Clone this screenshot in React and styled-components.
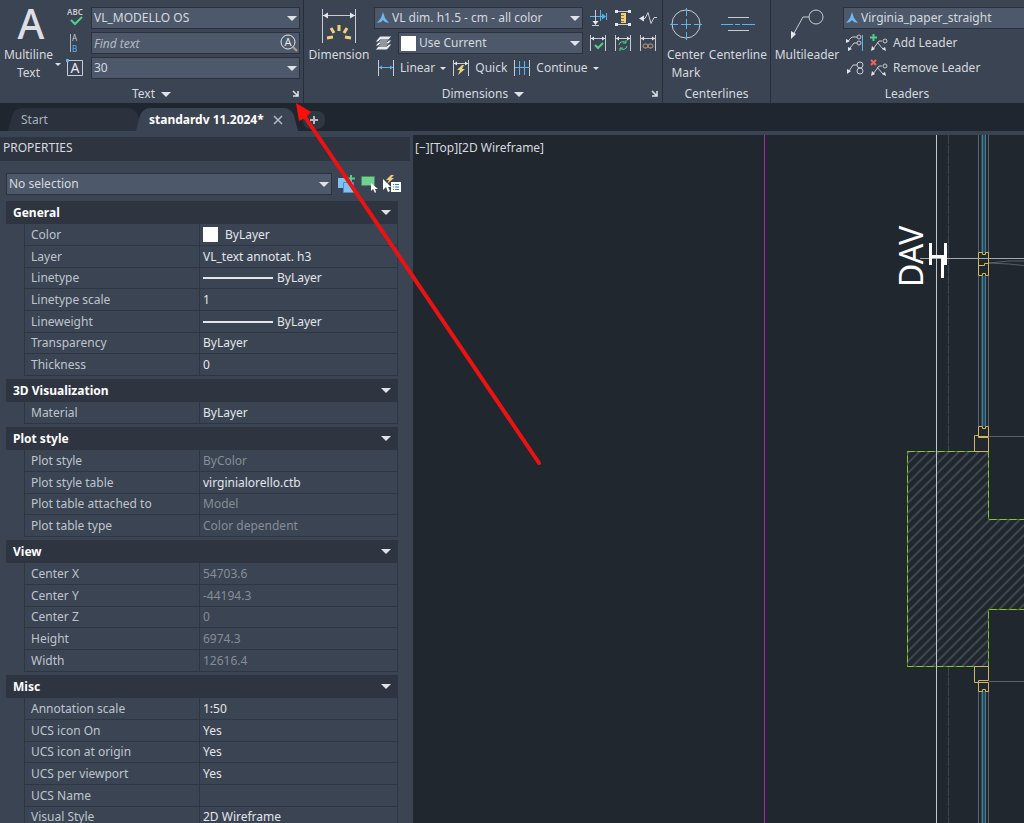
import React from "react";
import styled, { createGlobalStyle, css } from "styled-components";

const GlobalStyle = createGlobalStyle`
  * {
    box-sizing: border-box;
  }
  body {
    margin: 0;
    background: #21272f;
    color: #d5d9df;
    font-family: "Noto Sans", "Open Sans", sans-serif;
    font-size: 12px;
    line-height: 18px;
  }
  button, input, select {
    font: inherit;
    color: inherit;
  }
`;

// palette sections, top to bottom
const sections = [
  {
    title: "General",
    rows: [
      { name: "Color", value: "ByLayer", mark: "swatch" },
      { name: "Layer", value: "VL_text annotat. h3" },
      { name: "Linetype", value: "ByLayer", mark: "line" },
      { name: "Linetype scale", value: "1" },
      { name: "Lineweight", value: "ByLayer", mark: "line" },
      { name: "Transparency", value: "ByLayer" },
      { name: "Thickness", value: "0" },
    ],
  },
  { title: "3D Visualization", rows: [{ name: "Material", value: "ByLayer" }] },
  {
    title: "Plot style",
    rows: [
      { name: "Plot style", value: "ByColor", muted: true },
      { name: "Plot style table", value: "virginialorello.ctb" },
      { name: "Plot table attached to", value: "Model", muted: true },
      { name: "Plot table type", value: "Color dependent", muted: true },
    ],
  },
  {
    title: "View",
    rows: [
      { name: "Center X", value: "54703.6", muted: true },
      { name: "Center Y", value: "-44194.3", muted: true },
      { name: "Center Z", value: "0", muted: true },
      { name: "Height", value: "6974.3", muted: true },
      { name: "Width", value: "12616.4", muted: true },
    ],
  },
  {
    title: "Misc",
    rows: [
      { name: "Annotation scale", value: "1:50" },
      { name: "UCS icon On", value: "Yes" },
      { name: "UCS icon at origin", value: "Yes" },
      { name: "UCS per viewport", value: "Yes" },
      { name: "UCS Name", value: "" },
      { name: "Visual Style", value: "2D Wireframe" },
    ],
  },
];

const Caret = ({ size = 10 }) => (
  <svg width={size} height={size / 2} viewBox="0 0 10 5" aria-hidden="true">
    <path d="M0 0h10L5 5z" fill="#dfe3e8" />
  </svg>
);

const Icon = ({ w = 18, h = 18, children }) => (
  <svg
    width={w}
    height={h}
    viewBox={`0 0 ${w} ${h}`}
    fill="none"
    stroke="#c9cdd3"
    overflow="visible"
    aria-hidden="true"
  >
    {children}
  </svg>
);

const Combo = ({ label, value, icon }) => (
  <Field>
    {icon}
    <FieldSelect aria-label={label} defaultValue={value}>
      <option>{value}</option>
    </FieldSelect>
    <Caret />
  </Field>
);

const StyleIcon = () => (
  <Icon w={12} h={14}>
    <path d="M6 1l2 6 4 5-4-1-2-2-2 2-4 1 4-5z" fill="#6cb8f2" stroke="none" />
  </Icon>
);

const LauncherIcon = () => (
  <Icon w={8} h={8}>
    <path d="M1 1l5 5M6 1v5H1" stroke="#dfe3e8" strokeWidth="1.5" />
  </Icon>
);

const TextPanel = () => (
  <Panel>
    <PanelBody>
      <BigButton $width={65}>
        <Icon w={30} h={36}>
          <text
            x="13"
            y="31"
            textAnchor="middle"
            fontSize="41"
            fontWeight="500"
            fill="#dcdfe3"
            stroke="none"
          >
            A
          </text>
        </Icon>
        <SplitLabel>
          <span>
            Multiline
            <br />
            Text
          </span>
          <Caret size={6} />
        </SplitLabel>
      </BigButton>
      <Rows>
        <Row>
          <IconButton aria-label="Check spelling">
            <Icon w={20} h={20}>
              <text x="10" y="7" textAnchor="middle" fontSize="8" fontWeight="600" fill="#c9cdd3" stroke="none">
                ABC
              </text>
              <path d="M6 12l4 4 7-7" stroke="#4fd18b" strokeWidth="2" />
            </Icon>
          </IconButton>
          <Combo label="Text style" value="VL_MODELLO OS" />
        </Row>
        <Row>
          <IconButton aria-label="Text align">
            <Icon w={20} h={20}>
              <path d="M5.500 1v18" stroke="#aeb4bd" />
              <text x="7" y="8" fontSize="8" fill="#c9cdd3" stroke="none">A</text>
              <text x="7" y="19" fontSize="8" fill="#5ab4f0" stroke="none">B</text>
            </Icon>
          </IconButton>
          <Field>
            <FindInput type="text" aria-label="Find text" placeholder="Find text" />
            <Icon>
              <circle cx="9" cy="8" r="7" stroke="#e3e7ec" />
              <text x="9" y="12" textAnchor="middle" fontSize="11" fill="#e3e7ec" stroke="none">
                A
              </text>
              <path d="M14 13l4 4" stroke="#b3a184" strokeWidth="2" />
            </Icon>
          </Field>
        </Row>
        <Row>
          <IconButton aria-label="Text height">
            <Icon w={20} h={20}>
              <path d="M2.500 2.500h15v15h-15z" />
              <text x="10" y="15" textAnchor="middle" fontSize="14" fill="#e3e7ec" stroke="none">
                A
              </text>
              <path d="M1 1h3v3H1z" fill="#5ab4f0" stroke="none" />
            </Icon>
          </IconButton>
          <Combo label="Text height" value="30" />
        </Row>
      </Rows>
    </PanelBody>
    <PanelFooter>
      <FooterButton>
        Text <Caret />
      </FooterButton>
      <Launcher aria-label="Text style settings">
        <LauncherIcon />
      </Launcher>
    </PanelFooter>
  </Panel>
);

// vertical extension lines shared by the small dimension icons
const Extents = () => (
  <>
    <path d="M1.500 1v16M16.500 1v16M2 4.500h14" />
    <path d="M2 4.500l3-2v4zM16 4.500l-3-2v4z" fill="#e3e7ec" stroke="none" />
  </>
);

const DimensionsPanel = () => (
  <Panel $width={359}>
    <PanelBody $end={5}>
      <BigButton $width={70}>
        <Icon w={36} h={36}>
          <path d="M1.500 1v34M34.500 1v34M2 7.500h32" />
          <path d="M2 7.500l5-3v6zM34 7.500l-5-3v6z" fill="#e3e7ec" stroke="none" />
          <path
            d="M18 17v6M10 20l3 5M26 20l-3 5M6 30l6-1M30 30l-6-1"
            stroke="#f3cf77"
            strokeWidth="3"
          />
        </Icon>
        Dimension
      </BigButton>
      <Rows>
        <Row>
          <Combo label="Dimension style" value="VL dim. h1.5 - cm - all color" icon={<StyleIcon />} />
          <ToolGroup>
            <IconButton aria-label="Adjust space">
              <Icon>
                <path d="M1 7.500h15M11.500 1v11M17.500 4v7" stroke="#5ab4f0" />
                <path d="M6.500 1v14M3 16.500h7" />
                <path d="M17 7.500l-4-3v6z" fill="#5ab4f0" stroke="none" />
                <path d="M6.500 16l-3-4h6z" fill="#e3e7ec" stroke="none" />
              </Icon>
            </IconButton>
            <IconButton aria-label="Break">
              <Icon>
                <path d="M2 2.500h14M2 15.500h14" />
                <path d="M1 1h3v3H1zM14 1h3v3h-3zM1 14h3v3H1zM14 14h3v3h-3z" fill="#e3e7ec" stroke="none" />
                <path d="M7 4h5v10H7z" fill="#f3cf77" stroke="none" />
                <path d="M7 6.500h3M7 9.500h3M7 12.500h3" stroke="#8f7637" />
              </Icon>
            </IconButton>
            <IconButton aria-label="Jog line">
              <Icon>
                <path d="M1 9.500h5l3-6 3 11 3-6h3" />
                <path d="M0 9.500l5-3v6z" fill="#e3e7ec" stroke="none" />
              </Icon>
            </IconButton>
          </ToolGroup>
        </Row>
        <Row>
          <Icon>
            <path d="M6 10h12l-5 6H1zM6 6h12l-5 6H1zM6 2h12l-5 6H1z" fill="#e8eaed" stroke="#3b4453" />
          </Icon>
          <Combo label="Dimension layer" value="Use Current" icon={<Swatch />} />
          <ToolGroup>
            <IconButton aria-label="Inspect">
              <Icon>
                <Extents />
                <path d="M6 11l3 3 5-5" stroke="#4fd18b" strokeWidth="2" />
              </Icon>
            </IconButton>
            <IconButton aria-label="Update">
              <Icon>
                <Extents />
                <path d="M5 11a4 4 0 0 1 7-2M13 12a4 4 0 0 1-7 2M12 6v3H9M6 17v-3h3" stroke="#4fd18b" />
              </Icon>
            </IconButton>
            <IconButton aria-label="Reassociate">
              <Icon>
                <Extents />
                <rect x="4" y="10" width="5" height="4" rx="2" stroke="#c59b78" />
                <rect x="9" y="10" width="5" height="4" rx="2" stroke="#c59b78" />
              </Icon>
            </IconButton>
          </ToolGroup>
        </Row>
        <Row $indent>
          <ToolButton>
            <Icon>
              <path d="M1.500 1v16M16.500 1v16" />
              <path d="M2 8.500h14" stroke="#5ab4f0" />
              <path d="M2 8.500l3-2v4zM16 8.500l-3-2v4z" fill="#5ab4f0" stroke="none" />
            </Icon>
            Linear
            <Caret size={6} />
          </ToolButton>
          <ToolButton>
            <Icon>
              <Extents />
              <path d="M10 6l-5 5h3l-2 5 7-6h-3l2-4z" fill="#f3cf77" stroke="none" />
            </Icon>
            Quick
          </ToolButton>
          <ToolButton>
            <Icon>
              <path d="M1.500 1v16M16.500 1v16" />
              <path d="M6.500 2v14M11.500 2v14M2 8.500h15" stroke="#5ab4f0" />
            </Icon>
            Continue
            <Caret size={6} />
          </ToolButton>
        </Row>
      </Rows>
    </PanelBody>
    <PanelFooter>
      <FooterButton>
        Dimensions <Caret />
      </FooterButton>
      <Launcher aria-label="Dimension style settings">
        <LauncherIcon />
      </Launcher>
    </PanelFooter>
  </Panel>
);

const CenterlinesPanel = () => (
  <Panel $width={108}>
    <PanelBody $start={4} $gap={4}>
      <BigButton>
        <Icon w={34} h={36}>
          <circle cx="17" cy="16" r="14" />
          <path d="M1 16.500h8M12 16.500h10M25 16.500h8M17.500 0v8M17.500 11v10M17.500 24v8" stroke="#5ab4f0" />
        </Icon>
        Center
        <br />
        Mark
      </BigButton>
      <BigButton>
        <Icon w={34} h={36}>
          <path d="M7 9.500h21M7 22.500h21" />
          <path d="M0 16.500h12M14 16.500h5M21 16.500h13" stroke="#5ab4f0" />
        </Icon>
        Centerline
      </BigButton>
    </PanelBody>
    <PanelFooter>Centerlines</PanelFooter>
  </Panel>
);

const LeaderIcon = ({ mark }) => (
  <Icon>
    <path d="M3 15l6-8h3M7 8l6 7" />
    <circle cx="15" cy="7" r="2" />
    <path d="M1 17l1-5 3 3zM16 17l-4-2 3-2z" fill="#e3e7ec" stroke="none" />
    {mark === "add" ? (
      <path d="M3.500 0v7M0 3.500h7" stroke="#4fd18b" strokeWidth="2" />
    ) : (
      <path d="M1 1l5 5M6 1L1 6" stroke="#f0625f" strokeWidth="2" />
    )}
  </Icon>
);

const LeadersPanel = () => (
  <Panel $width={273}>
    <PanelBody>
      <BigButton $width={72}>
        <Icon w={36} h={36}>
          <circle cx="27" cy="9" r="7" />
          <path d="M20 9h-6L4 27" />
          <path d="M2 31v-8l5 3z" fill="#e3e7ec" stroke="none" />
        </Icon>
        Multileader
      </BigButton>
      <Rows>
        <Row>
          <Combo label="Multileader style" value="Virginia_paper_straight" icon={<StyleIcon />} />
        </Row>
        <Row $indent>
          <IconButton aria-label="Align leaders">
            <Icon>
              <path d="M2 7l4-4h5M4 14l4-5h3" />
              <circle cx="13" cy="3" r="2" />
              <circle cx="13" cy="9" r="2" />
              <path d="M0 9V5l4 2zM2 17v-4l4 2z" fill="#e3e7ec" stroke="none" />
              <path d="M16.500 1v16" stroke="#5ab4f0" />
            </Icon>
          </IconButton>
          <ToolButton>
            <LeaderIcon mark="add" />
            Add Leader
          </ToolButton>
        </Row>
        <Row $indent>
          <IconButton aria-label="Collect leaders">
            <Icon>
              <path d="M3 12l4-6h4" />
              <circle cx="14" cy="6" r="3" />
              <circle cx="14" cy="12" r="3" />
              <path d="M1 15v-5l4 2z" fill="#e3e7ec" stroke="none" />
            </Icon>
          </IconButton>
          <ToolButton>
            <LeaderIcon mark="remove" />
            Remove Leader
          </ToolButton>
        </Row>
      </Rows>
    </PanelBody>
    <PanelFooter>Leaders</PanelFooter>
  </Panel>
);

const PropertyValue = ({ row }) => (
  <ValueBox>
    {row.mark === "swatch" && <Swatch $spaced />}
    {row.mark === "line" && <LineSample />}
    {row.value}
  </ValueBox>
);

const Properties = () => (
  <Palette>
    <PaletteTitle>PROPERTIES</PaletteTitle>
    <PaletteBody>
      <SelectionRow>
        <Combo label="Selection" value="No selection" />
        <IconButton aria-label="Toggle PICKADD">
          <Icon>
            <path d="M1 3h10v10H1z" fill="#7dc1f5" stroke="none" />
            <path d="M6.500 7.500h10v10h-10z" fill="#7dc1f5" stroke="#4c8fc4" />
            <path d="M14 0v7M11 3.500h7" stroke="#4fd18b" strokeWidth="2" />
          </Icon>
        </IconButton>
        <IconButton aria-label="Select objects">
          <Icon>
            <path d="M1.500 1.500h13v9h-13z" fill="#74cf92" stroke="#3c8f5b" strokeDasharray="2 1" />
            <path d="M11 8v8l2-2 2 4 1-1-1-3h3z" fill="#fff" stroke="none" />
          </Icon>
        </IconButton>
        <IconButton aria-label="Quick select">
          <Icon>
            <path d="M8 0L3 5h3L4 9l7-6H8l3-3z" fill="#f3cf77" stroke="none" />
            <path d="M0 4v11l3-3 2 5 2-1-2-4h3z" fill="#fff" stroke="none" />
            <path d="M8 7h10v10H8z" fill="#fff" stroke="none" />
            <path d="M10 9.500h1M12 9.500h4M10 12h1M12 12h4M10 14.500h1M12 14.500h4" stroke="#2f7dbd" />
          </Icon>
        </IconButton>
      </SelectionRow>
      {sections.map((section) => (
        <Section key={section.title}>
          <SectionHeader>
            {section.title}
            <Caret />
          </SectionHeader>
          <PropertyTable>
            <tbody>
              {section.rows.map((row) => (
                <tr key={row.name}>
                  <PropertyName scope="row">{row.name}</PropertyName>
                  <PropertyCell $muted={row.muted}>
                    <PropertyValue row={row} />
                  </PropertyCell>
                </tr>
              ))}
            </tbody>
          </PropertyTable>
        </Section>
      ))}
    </PaletteBody>
  </Palette>
);

const Drawing = () => (
  <DrawingSvg role="img" aria-label="Plan drawing">
    <defs>
      <pattern id="hatch" width="7" height="7" patternUnits="userSpaceOnUse" patternTransform="rotate(45)">
        <path d="M1 0v7" stroke="#535b65" strokeWidth="1.2" />
      </pattern>
    </defs>
    <path d="M351.500 0v688" stroke="#a32aa5" />
    <path d="M535.500 0v316M535.500 532v156" stroke="#41474f" strokeDasharray="9 1" />
    {/* window glass */}
    <path d="M565.500 0v118M565.500 141v150M565.500 556v132M575.500 0v118M575.500 141v150M575.500 556v132" stroke="#5c636c" />
    <path d="M570.500 0v118M570.500 141v150M570.500 556v132" stroke="#2b4b59" strokeWidth="5" />
    <path d="M569.500 0v118M569.500 141v150M569.500 556v132M572.500 0v118M572.500 141v150M572.500 556v132" stroke="#417f96" />
    {/* wall */}
    <path
      d="M494.500 316.500h81v68H640v90h-64.500v57h-81z"
      fill="url(#hatch)"
      stroke="#4d7d20"
    />
    <path
      d="M494.500 316.500h81v68H640v90h-64.500v57h-81z"
      fill="none"
      stroke="#86c733"
      strokeDasharray="7 3"
    />
    <path d="M576 301.500h60M576 546.500h60" stroke="#596069" />
    <path d="M507 123.500h130" stroke="#a4a8ad" />
    <path d="M576 128l20-2h40M576 128l20 1 40 4" stroke="#596069" fill="none" />
    <g stroke="#d3b75f" fill="none">
      <path d="M565.500 117.500h4v2h3v-2h3v23h-3v-2h-3v2h-4zM565.500 130.500h6v-2h4" />
      <path d="M565.500 291.500h4v2h3v-2h3v10h-10zM562.500 300.500h3v2h10v14h-14v-16z" />
      <path d="M561.500 531.500h14v14h-10v2h-4zM565.500 547.500h10v9h-3v-2h-3v2h-4z" />
    </g>
    <path d="M523.500 0v688" stroke="#c3c6ca" />
    <path d="M517.500 108v22M532.500 108v22M517 121.500h16M529.500 121v22" stroke="#fff" strokeWidth="3" />
    <text transform="translate(510 152) rotate(-90)" fontSize="32" fill="#fff">
      DAV
    </text>
  </DrawingSvg>
);

export default function App() {
  return (
    <Page>
      <GlobalStyle />
      <Ribbon>
        <TextPanel />
        <DimensionsPanel />
        <CenterlinesPanel />
        <LeadersPanel />
      </Ribbon>
      <FileTabs>
        <Tab>
          <TabButton>Start</TabButton>
        </Tab>
        <Tab $active>
          <TabButton>standardv 11.2024*</TabButton>
          <CloseButton aria-label="Close drawing">
            <Icon w={10} h={10}>
              <path d="M1 1l8 8M9 1L1 9" stroke="#b7bcc4" strokeWidth="1.5" />
            </Icon>
          </CloseButton>
        </Tab>
        <NewTab aria-label="New drawing">
          <Icon w={10} h={10}>
            <path d="M5 1v8M1 5h8" stroke="#b7bcc4" strokeWidth="2" />
          </Icon>
        </NewTab>
      </FileTabs>
      <Workspace>
        <Properties />
        <Viewport>
          <Drawing />
          <ViewControls>[−][Top][2D Wireframe]</ViewControls>
        </Viewport>
      </Workspace>
      <Pointer width="250" height="368" viewBox="0 0 250 368" aria-hidden="true">
        <path d="M8 12L244 361" stroke="#ea1212" strokeWidth="4" strokeLinecap="round" />
        <path d="M1 1l3 18 6-3 6-6z" fill="#fb0f0c" />
      </Pointer>
    </Page>
  );
}

const Page = styled.div`
  position: relative;
  display: flex;
  flex-direction: column;
  height: 100vh;
  overflow: hidden;
`;

const plainButton = css`
  padding: 0;
  border: none;
  background: none;
  cursor: pointer;
`;

const Ribbon = styled.header`
  display: flex;
  flex: none;
  overflow: hidden;
  background: #3b4453;
`;
const Panel = styled.section`
  display: flex;
  flex: none;
  flex-direction: column;
  width: ${(props) => props.$width || 304}px;
  border-right: 1px solid #272e39;
`;
const PanelBody = styled.div`
  display: flex;
  gap: ${(props) => props.$gap || 0}px;
  height: 85px;
  padding: 7px ${(props) => props.$end || 3}px 0 ${(props) => props.$start || 0}px;
`;
const PanelFooter = styled.div`
  position: relative;
  display: flex;
  align-items: center;
  justify-content: center;
  height: 18px;
`;
const FooterButton = styled.button`
  ${plainButton}
  display: flex;
  align-items: center;
  gap: 6px;
`;
const Launcher = styled.button`
  ${plainButton}
  position: absolute;
  right: 3px;
  top: 5px;
  display: flex;
`;
const BigButton = styled.button`
  ${plainButton}
  display: flex;
  flex: none;
  flex-direction: column;
  align-items: center;
  width: ${(props) => (props.$width ? props.$width + "px" : "auto")};
  padding-top: 1px;
  > svg {
    flex: none;
    margin-bottom: 2px;
  }
`;
const SplitLabel = styled.span`
  display: flex;
  align-items: center;
  gap: 2px;
`;
const Rows = styled.div`
  display: flex;
  flex: 1;
  flex-direction: column;
  gap: 3px;
  min-width: 0;
`;
const Row = styled.div`
  display: flex;
  align-items: center;
  gap: 6px;
  height: 22px;
  padding-left: ${(props) => (props.$indent ? 3 : 0)}px;
`;
const IconButton = styled.button`
  ${plainButton}
  display: flex;
  flex: none;
`;
const ToolGroup = styled.div`
  display: flex;
  gap: 7px;
`;
const ToolButton = styled.button`
  ${plainButton}
  display: flex;
  align-items: center;
  gap: 5px;
`;
const Field = styled.div`
  display: flex;
  flex: 1;
  align-items: center;
  gap: 3px;
  min-width: 0;
  height: 22px;
  padding: 0 2px;
  border: 1px solid #2b323e;
  background: #4d596b;
  > svg {
    flex: none;
  }
`;
const FieldSelect = styled.select`
  flex: 1;
  min-width: 0;
  height: 20px;
  padding: 0;
  border: none;
  outline: none;
  background: none;
  appearance: none;
`;
const FindInput = styled.input`
  flex: 1;
  min-width: 0;
  height: 20px;
  padding: 0;
  border: none;
  outline: none;
  background: none;
  &::placeholder {
    color: #b3b9c2;
    font-style: italic;
    opacity: 1;
  }
`;
const Swatch = styled.span`
  flex: none;
  width: 15px;
  height: 15px;
  margin-right: ${(props) => (props.$spaced ? 7 : 0)}px;
  background: #fff;
`;

const FileTabs = styled.nav`
  display: flex;
  flex: none;
  align-items: flex-end;
  height: 28px;
  padding-left: 11px;
  background: #20262f;
`;
const Tab = styled.div`
  position: relative;
  display: flex;
  align-items: center;
  gap: 9px;
  width: ${(props) => (props.$active ? 156 : 128)}px;
  height: 23px;
  padding-left: 10px;
  color: ${(props) => (props.$active ? "#fff" : "#a9afb8")};
  font-weight: ${(props) => (props.$active ? "bold" : "normal")};
  z-index: ${(props) => (props.$active ? 1 : 0)};
  /* slanted sides of the tab */
  &::before,
  &::after {
    content: "";
    position: absolute;
    z-index: -1;
    top: 0;
    bottom: 0;
    background: ${(props) => (props.$active ? "#3b4453" : "#2b323e")};
  }
  &::before {
    left: 0;
    right: 20px;
    border-top-left-radius: 8px;
    transform: skewX(-15deg);
  }
  &::after {
    left: 20px;
    right: 0;
    border-top-right-radius: 8px;
    transform: skewX(15deg);
  }
`;
const TabButton = styled.button`
  ${plainButton}
  font-weight: inherit;
  white-space: nowrap;
`;
const CloseButton = styled.button`
  ${plainButton}
  display: flex;
`;
const NewTab = styled.button`
  ${plainButton}
  display: flex;
  align-items: center;
  justify-content: center;
  width: 22px;
  height: 18px;
  margin: 0 0 2px 8px;
  border-radius: 8px;
  background: #2f3743;
`;

const Workspace = styled.main`
  display: flex;
  flex: 1;
  min-height: 0;
  padding-top: 4px;
  background: #3b4453;
`;
const Palette = styled.aside`
  flex: none;
  width: 413px;
  padding-right: 3px;
  overflow: hidden;
`;
const PaletteTitle = styled.h2`
  height: 24px;
  margin: 2px 0 0;
  padding-left: 3px;
  background: #2f3441;
  font-size: 12px;
  font-weight: normal;
  line-height: 22px;
`;
const PaletteBody = styled.div`
  padding: 12px 12px 0 6px;
`;
const SelectionRow = styled.div`
  display: flex;
  align-items: center;
  gap: 5px;
  width: 395px;
  margin-bottom: 6px;
`;
const Section = styled.section`
  margin-bottom: 3px;
`;
const SectionHeader = styled.button`
  ${plainButton}
  display: flex;
  align-items: center;
  justify-content: space-between;
  width: 100%;
  height: 23px;
  padding: 0 7px;
  background: #2f3441;
  color: #fff;
  font-weight: bold;
`;
const PropertyTable = styled.table`
  width: calc(100% - 18px);
  margin-left: 18px;
  border-collapse: separate;
  border-spacing: 0;
  border-left: 1px solid #2e3643;
  table-layout: fixed;
  tr {
    height: 22px;
  }
  tr:nth-child(3n) {
    height: 21px;
  }
`;
const PropertyName = styled.th`
  width: 175px;
  padding: 0 6px;
  border-right: 1px solid #2e3643;
  border-bottom: 1px solid #2e3643;
  color: #bfc4cc;
  font-weight: normal;
  text-align: left;
`;
const PropertyCell = styled.td`
  padding: 0 3px;
  border-right: 1px solid #2e3643;
  border-bottom: 1px solid #2e3643;
  color: ${(props) => (props.$muted ? "#868d98" : "#e3e6ea")};
`;
const ValueBox = styled.div`
  display: flex;
  align-items: center;
  height: 18px;
`;
const LineSample = styled.span`
  width: 70px;
  height: 2px;
  margin-right: 4px;
  background: #e3e6ea;
`;

const Viewport = styled.section`
  position: relative;
  flex: 1;
  min-width: 0;
  overflow: hidden;
  background: #21272f;
`;
const ViewControls = styled.div`
  position: absolute;
  top: 4px;
  left: 2px;
`;
const DrawingSvg = styled.svg`
  display: block;
  width: 100%;
  height: 100%;
`;
const Pointer = styled.svg`
  position: absolute;
  top: 102px;
  left: 295px;
  pointer-events: none;
  z-index: 2;
`;
